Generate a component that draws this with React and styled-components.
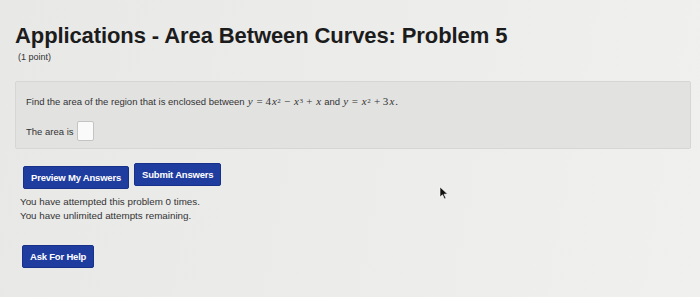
import React from "react"
import styled, { createGlobalStyle } from "styled-components"

const GlobalStyle = createGlobalStyle`
  html, body {
    margin: 0;
    padding: 0;
    background: #ebebea;
    font-family: "Liberation Sans", Arial, sans-serif;
    color: #2a2a2a;
  }
`

const Page = styled.div`
  position: relative;
  width: 700px;
  height: 297px;
  overflow: hidden;
  padding: 23px 10px 0 15px;
  box-sizing: border-box;
  background: linear-gradient(100deg, #e8e8e7 0%, #ececeb 50%, #f0f0ef 100%);
`

const Title = styled.h1`
  margin: 0;
  font-size: 22px;
  font-weight: 700;
  letter-spacing: -0.1px;
  color: #1c1c1c;
  line-height: 26px;
`

const Points = styled.div`
  margin: 3px 0 0 3px;
  font-size: 9px;
  color: #333;
`

const ProblemBox = styled.div`
  margin-top: 19px;
  width: 676px;
  height: 68px;
  box-sizing: border-box;
  padding: 12px 10px;
  background: #e2e2e1;
  border: 1px solid #d6d6d5;
  border-radius: 2px;
  font-size: 9.5px;
  color: #333;
`

const Line = styled.div`
  display: flex;
  align-items: center;
  height: ${(p) => p.h || 14}px;
  margin-bottom: ${(p) => p.gap || 0}px;
`

const Math = styled.span`
  font-family: "Liberation Serif", "Times New Roman", serif;
  font-style: ${(p) => (p.upright ? "normal" : "italic")};
  font-size: 11px;
  margin: 0 0.5px;
`

const Sup = styled.sup`
  font-family: "Liberation Serif", serif;
  font-style: normal;
  font-size: 7px;
`

const AnswerInput = styled.span`
  display: inline-block;
  width: 15px;
  height: 18px;
  margin-left: 3px;
  background: #fafafa;
  border: 1px solid #c4c4c4;
  border-radius: 2px;
`

const ButtonRow = styled.div`
  display: flex;
  gap: 5px;
  align-items: flex-start;
  margin: 14px 0 0 8px;
`

const Button = styled.button`
  font-family: "Liberation Sans", Arial, sans-serif;
  font-size: 9.5px;
  font-weight: 700;
  color: #fff;
  background: #1f3c9f;
  border: 1px solid #17308a;
  border-radius: 2px;
  height: 23px;
  padding: 0 ${(p) => p.px || 8}px;
  margin-top: ${(p) => p.mt || 0}px;
  letter-spacing: -0.2px;
`

const Attempts = styled.div`
  margin: 6px 0 0 5px;
  font-size: 9.8px;
  line-height: 14px;
  color: #333;
`

const HelpRow = styled.div`
  margin: 22px 0 0 7px;
`

const Cursor = styled.svg`
  position: absolute;
  left: 439px;
  top: 186px;
`

export default function App() {
  return (
    <Page>
      <GlobalStyle />
      <Title>Applications - Area Between Curves: Problem 5</Title>
      <Points>(1 point)</Points>
      <ProblemBox>
        <Line gap={14}>
          Find the area of the region that is enclosed between&nbsp;
          <Math>y</Math>
          <Math upright>&nbsp;=&nbsp;4</Math>
          <Math>x</Math>
          <Sup>2</Sup>
          <Math upright>&nbsp;−&nbsp;</Math>
          <Math>x</Math>
          <Sup>3</Sup>
          <Math upright>&nbsp;+&nbsp;</Math>
          <Math>x</Math>
          &nbsp;and&nbsp;
          <Math>y</Math>
          <Math upright>&nbsp;=&nbsp;</Math>
          <Math>x</Math>
          <Sup>2</Sup>
          <Math upright>&nbsp;+&nbsp;3</Math>
          <Math>x</Math>
          <Math upright>.</Math>
        </Line>
        <Line h={18}>
          The area is
          <AnswerInput />
        </Line>
      </ProblemBox>
      <ButtonRow>
        <Button px={7} mt={3}>Preview My Answers</Button>
        <Button px={7}>Submit Answers</Button>
      </ButtonRow>
      <Attempts>
        You have attempted this problem 0 times.
        <br />
        You have unlimited attempts remaining.
      </Attempts>
      <HelpRow>
        <Button px={7}>Ask For Help</Button>
      </HelpRow>
      <Cursor width="10" height="14" viewBox="0 0 10 14">
        <path d="M1 1 L1 11 L3.5 8.8 L5.5 13 L7 12.3 L5 8.2 L8.5 8 Z" fill="#111" stroke="#fff" strokeWidth="0.6" />
      </Cursor>
    </Page>
  )
}
